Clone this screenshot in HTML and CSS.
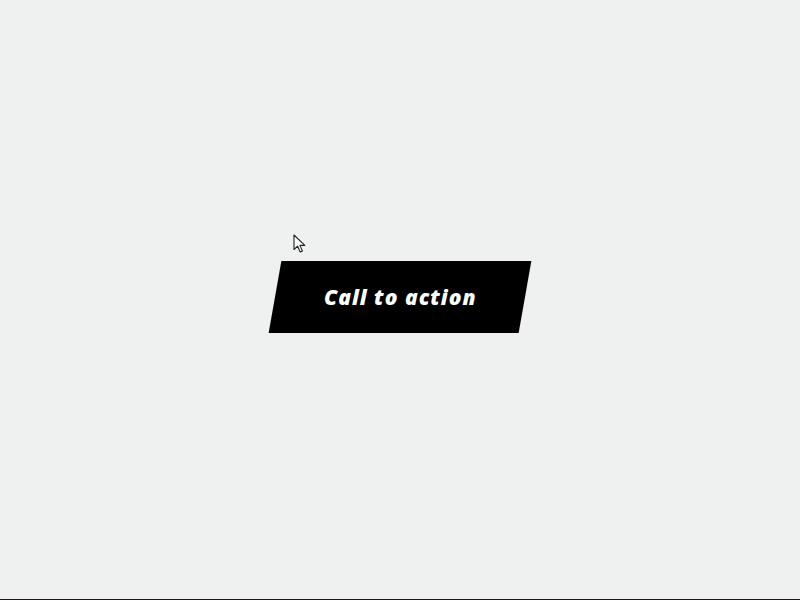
FILE: index.html
```html
<!DOCTYPE html>
<html lang="en">
<head>
<meta charset="utf-8">
<title>Call to action</title>
<link rel="stylesheet" href="styles.css">
</head>
<body>
<main class="page">
  <div class="stage">
    <a class="cta" href="#"><span class="cta-label">Call to action</span></a>
    <svg class="cursor" width="14" height="20" viewBox="0 0 14 20" aria-hidden="true">
      <path d="M1 1 L1 15.5 L4.6 12.2 L7.2 18 L9.4 17 L6.9 11.4 L11.8 11.4 Z" fill="#fff" stroke="#222" stroke-width="1.1" stroke-linejoin="round"/>
    </svg>
  </div>
</main>
</body>
</html>
```
FILE: styles.css
```css
html, body {
  margin: 0;
  padding: 0;
  background: #eff0f0;
}
.page {
  box-sizing: border-box;
  height: 100vh;
  border-bottom: 1px solid #1a1a1a;
  display: flex;
  align-items: center;
  justify-content: center;
  padding-bottom: 5px;
}
.stage {
  position: relative;
}
.cta {
  display: flex;
  align-items: center;
  justify-content: center;
  width: 250px;
  height: 72px;
  background: #000;
  transform: skewX(-10deg);
  text-decoration: none;
}
.cta-label {
  display: block;
  transform: skewX(10deg);
  color: #fff;
  font-family: "Open Sans", Lato, sans-serif;
  font-weight: 800;
  font-style: italic;
  font-size: 21px;
  letter-spacing: 1px;
  margin-top: -1px;
}
.cursor {
  position: absolute;
  left: 18px;
  top: -27px;
}
```
